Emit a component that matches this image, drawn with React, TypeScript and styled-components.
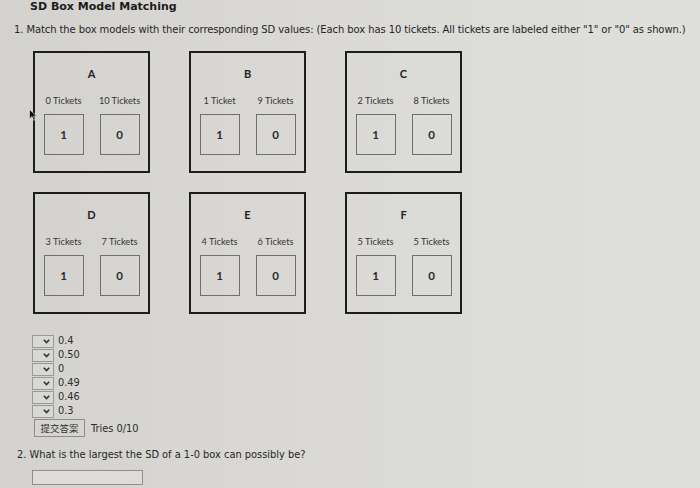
import React from 'react';
import styled, {createGlobalStyle} from 'styled-components';

const GlobalStyle = createGlobalStyle`
    html, body {
        margin: 0;
        padding: 0;
    }
    body {
        width: 700px;
        height: 488px;
        overflow: hidden;
        background: linear-gradient(90deg, #d4d2ce 0%, #dad9d5 45%, #dfe0dc 100%);
        color: #222;
        font-family: "DejaVu Sans", Verdana, sans-serif;
    }
`;

const Page = styled.div`
    position: relative;
    height: 488px;
    padding: 0 0 0 14px;
    box-sizing: border-box;
`;

const Title = styled.div`
    padding-left: 16px;
    font-size: 11px;
    font-weight: bold;
    line-height: 14px;
    color: #1c1c1c;
`;

const Question = styled.div`
    margin-top: 10px;
    font-size: 10px;
    line-height: 12px;
    letter-spacing: -0.1px;
    white-space: nowrap;
    color: #262626;
`;

const BoxGrid = styled.div`
    display: grid;
    grid-template-columns: repeat(3, 117px);
    column-gap: 39px;
    row-gap: 19px;
    margin: 15px 0 0 19px;
`;

const ModelBox = styled.div`
    height: 122px;
    box-sizing: border-box;
    border: 2px solid #1d1d1d;
    display: flex;
    flex-direction: column;
    align-items: center;
    padding-top: 14px;
    font-family: Lato, "Open Sans", sans-serif;
`;

const BoxLetter = styled.div`
    font-size: 11px;
    font-weight: bold;
    line-height: 14px;
    color: #222;
`;

const Pairs = styled.div`
    display: flex;
    gap: 16px;
    margin-top: 14px;
`;

const Pair = styled.div`
    width: 40px;
    display: flex;
    flex-direction: column;
    align-items: center;
`;

const TicketLabel = styled.div`
    font-size: 9.2px;
    line-height: 12px;
    white-space: nowrap;
    color: #333;
`;

const Ticket = styled.div`
    margin-top: 7px;
    width: 40px;
    height: 41px;
    box-sizing: border-box;
    border: 1px solid #6f6f6f;
    display: flex;
    align-items: center;
    justify-content: center;
    font-size: 11.5px;
    font-weight: bold;
    color: #2a2a2a;
`;

const Answers = styled.div`
    margin: 20px 0 0 18px;
    display: flex;
    flex-direction: column;
`;

const AnswerRow = styled.div`
    display: flex;
    align-items: center;
    height: 14px;
    gap: 4px;
`;

const SelectBox = styled.div`
    width: 22px;
    height: 13px;
    box-sizing: border-box;
    border: 1px solid #9a9a98;
    background: #d9d8d4;
    display: flex;
    align-items: center;
    justify-content: flex-end;
    padding-right: 3px;
`;

const AnswerText = styled.span`
    font-size: 9.8px;
    color: #2c2c2c;
    line-height: 14px;
`;

const SubmitRow = styled.div`
    display: flex;
    align-items: center;
    gap: 6px;
    margin: 1px 0 0 20px;
`;

const Button = styled.div`
    width: 51px;
    height: 18px;
    box-sizing: border-box;
    border: 1px solid #8d8d8b;
    background: #d6d5d1;
    display: flex;
    align-items: center;
    justify-content: center;
    font-family: "Noto Sans CJK SC", sans-serif;
    font-size: 9.5px;
    color: #333;
`;

const Tries = styled.span`
    font-size: 9.8px;
    color: #2c2c2c;
`;

const Question2 = styled.div`
    margin: 12px 0 0 3px;
    font-size: 9.85px;
    line-height: 12px;
    color: #262626;
`;

const AnswerInput = styled.div`
    margin: 9px 0 0 18px;
    width: 111px;
    height: 15px;
    box-sizing: border-box;
    border: 1px solid #8f8f8d;
    background: #dddcd8;
`;

const PartialButton = styled.div`
    margin: 3px 0 0 22px;
    width: 48px;
    height: 10px;
    border: 1px solid #8d8d8b;
    border-bottom: none;
    background: #d6d5d1;
`;

const Pointer = styled.svg`
    position: absolute;
    left: 29px;
    top: 109px;
`;

const Chevron = () => (
    <svg width='7' height='5' viewBox='0 0 7 5'>
        <path d='M0.8 0.8 L3.5 3.6 L6.2 0.8' fill='none' stroke='#333' strokeWidth='1.6'/>
    </svg>
);

const boxes = [
    {letter: 'A', ones: '0 Tickets', zeros: '10 Tickets'},
    {letter: 'B', ones: '1 Ticket', zeros: '9 Tickets'},
    {letter: 'C', ones: '2 Tickets', zeros: '8 Tickets'},
    {letter: 'D', ones: '3 Tickets', zeros: '7 Tickets'},
    {letter: 'E', ones: '4 Tickets', zeros: '6 Tickets'},
    {letter: 'F', ones: '5 Tickets', zeros: '5 Tickets'},
];

const answers = ['0.4', '0.50', '0', '0.49', '0.46', '0.3'];

export default function App() {
    return (
        <React.Fragment>
            <GlobalStyle/>
            <Page>
                <Title>SD Box Model Matching</Title>
                <Question>
                    1. Match the box models with their corresponding SD values: (Each box has 10 tickets. All tickets are labeled either "1" or "0" as shown.)
                </Question>
                <BoxGrid>
                    {boxes.map(box => (
                        <ModelBox key={box.letter}>
                            <BoxLetter>{box.letter}</BoxLetter>
                            <Pairs>
                                <Pair>
                                    <TicketLabel>{box.ones}</TicketLabel>
                                    <Ticket>1</Ticket>
                                </Pair>
                                <Pair>
                                    <TicketLabel>{box.zeros}</TicketLabel>
                                    <Ticket>0</Ticket>
                                </Pair>
                            </Pairs>
                        </ModelBox>
                    ))}
                </BoxGrid>
                <Answers>
                    {answers.map((a, i) => (
                        <AnswerRow key={i}>
                            <SelectBox><Chevron/></SelectBox>
                            <AnswerText>{a}</AnswerText>
                        </AnswerRow>
                    ))}
                </Answers>
                <SubmitRow>
                    <Button>提交答案</Button>
                    <Tries>Tries 0/10</Tries>
                </SubmitRow>
                <Question2>2. What is the largest the SD of a 1-0 box can possibly be?</Question2>
                <AnswerInput/>
                <PartialButton/>
                <Pointer width='8' height='12' viewBox='0 0 8 12'>
                    <path d='M0.5 0.5 L0.5 10 L3 7.6 L4.8 11.3 L6.2 10.6 L4.5 7 L7.6 7 Z' fill='#111' stroke='#eee' strokeWidth='0.6'/>
                </Pointer>
            </Page>
        </React.Fragment>
    );
}
